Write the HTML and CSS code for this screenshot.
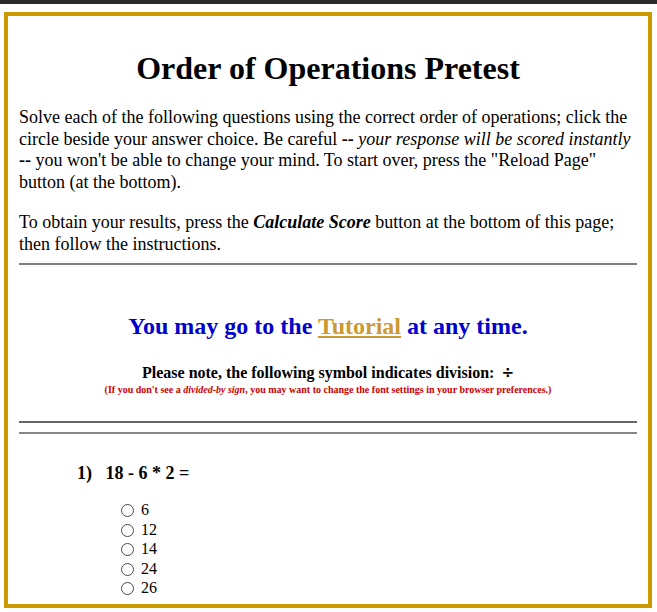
FILE: index.html
```html
<!DOCTYPE html>
<html>
<head>
<meta charset="utf-8">
<title>Order of Operations Pretest</title>
<link rel="stylesheet" href="styles.css">
</head>
<body>
<div class="topbar"></div>
<div class="frame">
  <h1 class="title">Order of Operations Pretest</h1>
  <p class="intro">Solve each of the following questions using the correct order of operations; click the circle beside your answer choice. Be careful <b>--</b> <i>your response will be scored instantly</i> <b>--</b> you won't be able to change your mind. To start over, press the "Reload Page" button (at the bottom).</p>
  <p class="intro second">To obtain your results, press the <b><i>Calculate Score</i></b> button at the bottom of this page; then follow the instructions.</p>
  <hr class="rule rule-top">
  <h2 class="tutorial">You may go to the <a href="#" class="tut-link">Tutorial</a> at any time.</h2>
  <p class="note">Please note, the following symbol indicates division: <span class="divsign">÷</span></p>
  <p class="warn">(If you don't see a <i>divided-by sign</i>, you may want to change the font settings in your browser preferences.)</p>
  <hr class="rule rule-a">
  <hr class="rule rule-b">
  <div class="question">
    <p class="q-text">1)&nbsp;&nbsp; 18 - 6 * 2 =</p>
    <ul class="choices">
      <li><label><input type="radio" name="q1"> 6</label></li>
      <li><label><input type="radio" name="q1"> 12</label></li>
      <li><label><input type="radio" name="q1"> 14</label></li>
      <li><label><input type="radio" name="q1"> 24</label></li>
      <li><label><input type="radio" name="q1"> 26</label></li>
    </ul>
  </div>
</div>
</body>
</html>
```
FILE: styles.css
```css
html, body {
  margin: 0;
  padding: 0;
  background: #ffffff;
  font-family: "Liberation Serif", "Times New Roman", serif;
  color: #000000;
  overflow: hidden;
}
.topbar {
  height: 4px;
  background: #2b2b2b;
}
.frame {
  margin: 8px 5px 0 4px;
  border: 4px solid #cc9900;
  padding: 0 11px 6px 11px;
}
.title {
  font-size: 32px;
  font-weight: bold;
  text-align: center;
  margin: 35px 0 22px 0;
  line-height: 34px;
}
.intro {
  font-size: 18px;
  line-height: 21.67px;
  margin: 0;
}
.intro.second {
  margin-top: 18.5px;
}
.rule {
  border: 0;
  height: 2px;
  background: #808080;
  margin: 0;
}
.rule-top {
  margin-top: 7.5px;
}
.tutorial {
  color: #0000cc;
  font-size: 24px;
  text-align: center;
  margin: 47px 0 0 0;
  line-height: 28px;
}
.tut-link {
  color: #cc9933;
  text-decoration: underline;
}
.note {
  font-size: 16px;
  font-weight: bold;
  text-align: center;
  margin: 22.5px 0 0 0;
  line-height: 19px;
}
.divsign {
  font-family: "DejaVu Sans", sans-serif;
  font-size: 15px;
  font-weight: bold;
  margin-left: 3px;
}
.warn {
  font-size: 10px;
  font-weight: bold;
  color: #cc0000;
  text-align: center;
  margin: 0;
  line-height: 13px;
}
.rule-a {
  margin-top: 25.5px;
  background: #666666;
}
.rule-b {
  margin-top: 8.5px;
  background: #888888;
}
.question {
  padding-left: 58px;
}
.q-text {
  font-size: 18px;
  font-weight: bold;
  margin: 29.5px 0 0 0;
  line-height: 21px;
}
.choices {
  list-style: none;
  margin: 16px 0 0 0;
  padding: 0 0 0 39px;
}
.choices li {
  font-size: 16px;
  line-height: 19.5px;
  height: 19.5px;
}
.choices input {
  -webkit-appearance: none;
  appearance: none;
  box-sizing: border-box;
  margin: 0 3px 0 5px;
  width: 13px;
  height: 13px;
  border: 1px solid #4a4a4a;
  border-radius: 50%;
  background: #ffffff;
  vertical-align: -2px;
}
```
